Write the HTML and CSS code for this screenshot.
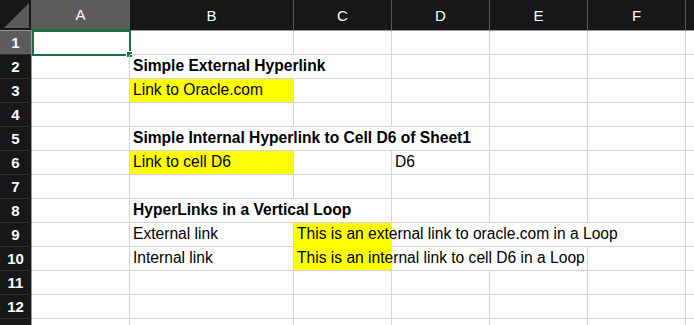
FILE: index.html
```html
<!DOCTYPE html>
<html lang="en">
<head>
    <meta charset="UTF-8">
    <title>Sheet1</title>
    <link rel="stylesheet" href="styles.css">
</head>
<body>
    <div class="sheet">
        <!-- column headers -->
        <div class="corner">
            <svg width="32" height="31" viewBox="0 0 32 31"><polygon points="4,28 29,28 29,3" fill="#5b5b5b"/></svg>
        </div>
        <div class="colhead active">A</div>
        <div class="colhead">B</div>
        <div class="colhead">C</div>
        <div class="colhead">D</div>
        <div class="colhead">E</div>
        <div class="colhead">F</div>
        <div class="colhead"></div>

        <!-- row 1 -->
        <div class="rowhead active">1</div>
        <div class="cell selected"><div class="sel-box"></div><div class="sel-handle"></div></div>
        <div class="cell"></div><div class="cell"></div><div class="cell"></div><div class="cell"></div><div class="cell"></div><div class="cell"></div>

        <!-- row 2 -->
        <div class="rowhead">2</div>
        <div class="cell"></div>
        <div class="cell bold span2">Simple External Hyperlink</div>
        <div class="cell"></div><div class="cell"></div><div class="cell"></div><div class="cell"></div>

        <!-- row 3 -->
        <div class="rowhead">3</div>
        <div class="cell"></div>
        <div class="cell yellow">Link to Oracle.com</div>
        <div class="cell"></div><div class="cell"></div><div class="cell"></div><div class="cell"></div><div class="cell"></div>

        <!-- row 4 -->
        <div class="rowhead">4</div>
        <div class="cell"></div><div class="cell"></div><div class="cell"></div><div class="cell"></div><div class="cell"></div><div class="cell"></div><div class="cell"></div>

        <!-- row 5 -->
        <div class="rowhead">5</div>
        <div class="cell"></div>
        <div class="cell bold span3">Simple Internal Hyperlink to Cell D6 of Sheet1</div>
        <div class="cell"></div><div class="cell"></div><div class="cell"></div>

        <!-- row 6 -->
        <div class="rowhead">6</div>
        <div class="cell"></div>
        <div class="cell yellow">Link to cell D6</div>
        <div class="cell"></div>
        <div class="cell">D6</div>
        <div class="cell"></div><div class="cell"></div><div class="cell"></div>

        <!-- row 7 -->
        <div class="rowhead">7</div>
        <div class="cell"></div><div class="cell"></div><div class="cell"></div><div class="cell"></div><div class="cell"></div><div class="cell"></div><div class="cell"></div>

        <!-- row 8 -->
        <div class="rowhead">8</div>
        <div class="cell"></div>
        <div class="cell bold span2">HyperLinks in a Vertical Loop</div>
        <div class="cell"></div><div class="cell"></div><div class="cell"></div><div class="cell"></div>

        <!-- row 9 -->
        <div class="rowhead">9</div>
        <div class="cell"></div>
        <div class="cell">External link</div>
        <div class="cell span4 part-yellow joined">This is an external link to oracle.com in a Loop</div>
        <div class="cell"></div>

        <!-- row 10 -->
        <div class="rowhead">10</div>
        <div class="cell"></div>
        <div class="cell">Internal link</div>
        <div class="cell span3 part-yellow">This is an internal link to cell D6 in a Loop</div>
        <div class="cell"></div><div class="cell"></div>

        <!-- row 11 -->
        <div class="rowhead">11</div>
        <div class="cell"></div><div class="cell"></div><div class="cell"></div><div class="cell"></div><div class="cell"></div><div class="cell"></div><div class="cell"></div>

        <!-- row 12 -->
        <div class="rowhead">12</div>
        <div class="cell"></div><div class="cell"></div><div class="cell"></div><div class="cell"></div><div class="cell"></div><div class="cell"></div><div class="cell"></div>

        <!-- row 13 (only its top edge is in view) -->
        <div class="rowhead"></div>
        <div class="cell"></div><div class="cell"></div><div class="cell"></div><div class="cell"></div><div class="cell"></div><div class="cell"></div><div class="cell"></div>
    </div>
</body>
</html>
```

FILE: styles.css
```css
body {
    margin: 0;
    background: #fff;
    font-family: "Liberation Sans", Arial, sans-serif;
    overflow: hidden;
}
.sheet {
    display: grid;
    grid-template-columns: 32px 98px 164px 98px 98px 98px 98px 98px;
    grid-template-rows: 31px;
    grid-auto-rows: 24px;
    width: 694px;
    height: 325px;
    overflow: hidden;
}

/* headers */
.corner {
    background: #171717;
    border-right: 1px solid #5a5a5a;
    border-bottom: 1px solid #9a9a9a;
    box-sizing: border-box;
}
.corner svg { display: block; }
.colhead {
    background: #171717;
    color: #fff;
    font-size: 15px;
    display: flex;
    align-items: center;
    justify-content: center;
    border-right: 1px solid #5a5a5a;
    border-bottom: 1px solid #9a9a9a;
    box-sizing: border-box;
}
.rowhead {
    background: #171717;
    color: #fff;
    font-size: 15px;
    font-weight: bold;
    display: flex;
    align-items: center;
    justify-content: center;
    border-right: 1px solid #9a9a9a;
    border-bottom: 1px solid #2e2e2e;
    box-sizing: border-box;
}
.colhead.active,
.rowhead.active {
    background: #5c5c5c;
}
.colhead.active { border-bottom: 2px solid #1f6e43; }

/* cells */
.cell {
    position: relative;
    box-sizing: border-box;
    border-right: 1px solid #d4d4d4;
    border-bottom: 1px solid #d4d4d4;
    font-size: 15.6px;
    line-height: 18px;
    color: #000;
    white-space: nowrap;
    display: flex;
    align-items: flex-end;
    padding: 0 0 3px 3px;
}
.bold { font-weight: bold; }
.span2 { grid-column: span 2; }
.span3 { grid-column: span 3; }
.span4 { grid-column: span 4; }
.yellow { background: #ffff00; }
.part-yellow {
    background: linear-gradient(to right, #ffff00 98px, transparent 98px);
}
.part-yellow.joined {
    border-bottom: none;
    padding-bottom: 4px;
    background:
        linear-gradient(#d4d4d4, #d4d4d4) right bottom / calc(100% - 98px) 1px no-repeat,
        linear-gradient(to right, #ffff00 98px, transparent 98px);
}

/* selection */
.sel-box {
    position: absolute;
    left: 0;
    top: -1px;
    right: -2px;
    bottom: -2px;
    border: 2px solid #1f6e43;
}
.sel-handle {
    position: absolute;
    right: -4px;
    bottom: -4px;
    width: 5px;
    height: 5px;
    background: #1f6e43;
    border: 1px solid #fff;
}
```
